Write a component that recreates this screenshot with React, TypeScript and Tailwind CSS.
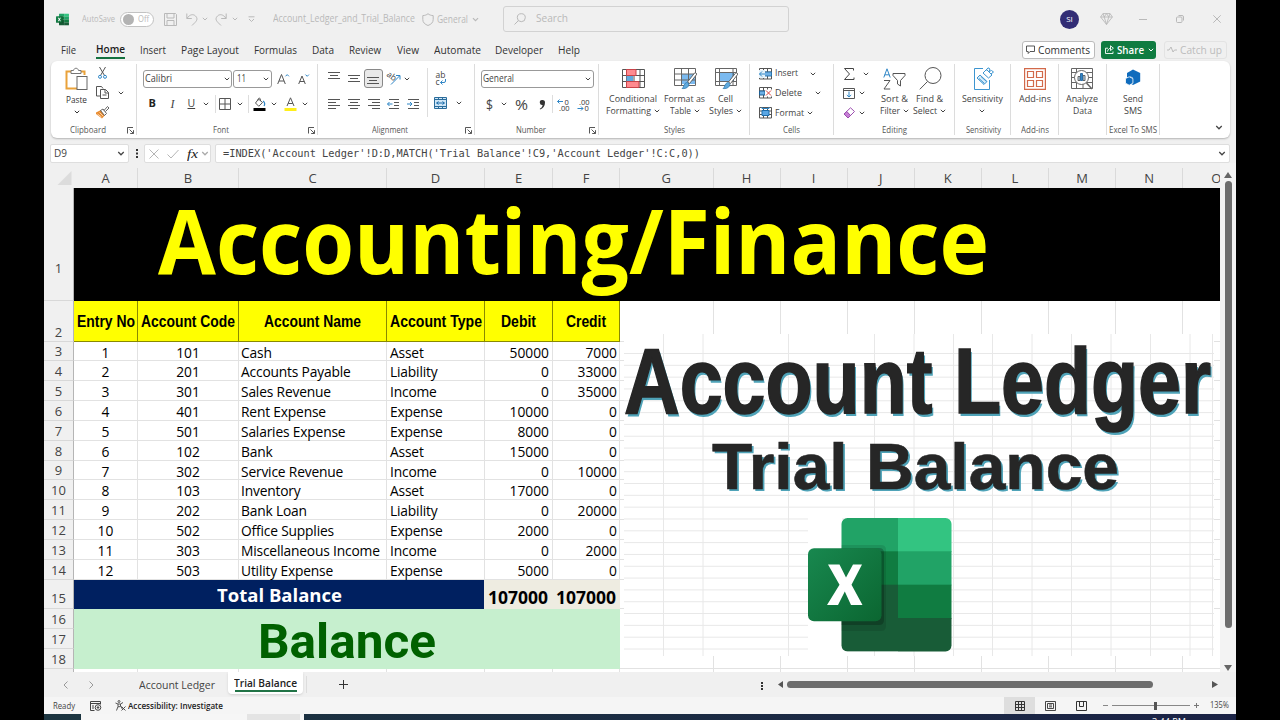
import { useLayoutEffect, useRef, type ReactNode } from "react";
import clsx from "clsx";

type FitProps = { className?: string; children: ReactNode };

// Stretches or squeezes one line of text to the width of its box
function Fit({ className, children }: FitProps) {
  const box = useRef<HTMLSpanElement>(null);
  const text = useRef<HTMLSpanElement>(null);

  useLayoutEffect(() => {
    if (!box.current || !text.current) return;
    text.current.style.transform = "none";
    const ratio = box.current.getBoundingClientRect().width / text.current.getBoundingClientRect().width;
    text.current.style.transform = `scaleX(${ratio})`;
  });

  return (
    <span ref={box} className={clsx("block shrink-0 whitespace-nowrap", className)}>
      <span ref={text} className="inline-block origin-left">{children}</span>
    </span>
  );
}

function Chevron({ className }: { className?: string }) {
  return (
    <svg viewBox="0 0 6 4" className={clsx("h-1 w-1.5 shrink-0", className)} fill="none" stroke="currentColor" strokeWidth="1">
      <path d="M.8.800 3 3 5.200.800" />
    </svg>
  );
}

function ExcelLogo({ className }: { className?: string }) {
  return (
    <svg viewBox="0 0 144 134" className={className}>
      <defs>
        <linearGradient id="plate" x1="0" y1="0" x2="1" y2="1">
          <stop offset="0" stopColor="#18884f" />
          <stop offset="1" stopColor="#0b6631" />
        </linearGradient>
        <clipPath id="sheet"><rect x="33.5" y="0" width="110" height="133.5" rx="6" /></clipPath>
      </defs>
      <g clipPath="url(#sheet)">
        <rect x="33" width="57" height="34" fill="#21a366" />
        <rect x="90" width="54" height="34" fill="#33c481" />
        <rect x="33" y="33.3" width="57" height="34" fill="#107c41" />
        <rect x="90" y="33.3" width="54" height="34" fill="#21a366" />
        <rect x="33" y="66.7" width="57" height="67" fill="#185c37" />
        <rect x="90" y="66.7" width="54" height="34" fill="#107c41" />
        <rect x="90" y="100" width="54" height="34" fill="#185c37" />
        <path d="M33 27h40q5 0 5 5v76q0 5-5 5H33z" fill="#000" opacity=".1" />
        <path d="M33 30h38q5 0 5 5v67q0 5-5 5H33z" fill="#000" opacity=".22" />
      </g>
      <rect y="30.3" width="73.5" height="73" rx="6" fill="url(#plate)" />
      <path d="M20 46.500H31.500L38 59.500 45 46.500H54L43.500 66.700 54.500 87H43L36.800 73.500 30 87H19L31.500 66.700z" fill="#fff" />
    </svg>
  );
}

const faded = "text-[#b9b9b9]";

function TitleBar() {
  return (
    <div className={clsx("flex h-[38px] items-center pl-3", faded)}>
      <ExcelLogo className="h-[13px] w-[13px]" />
      <Fit className="ml-[13px] w-[33px] text-[9px]">AutoSave</Fit>
      <div className="ml-[5px] flex h-[15px] w-[34px] items-center rounded-full border border-[#c2c2c2] bg-white pl-[2px]">
        <div className="h-[11px] w-[11px] rounded-full bg-[#b3b3b3]" />
        <Fit className="ml-1 w-[11px] text-[9px]">Off</Fit>
      </div>
      <svg viewBox="0 0 13 13" className="ml-[10px] h-[13px] w-[13px]" fill="none" stroke="currentColor">
        <path d="M.5.500h11l1 1v11H.5zM3 .5v4.500h7V.5M3 12.500v-5h7v5" />
      </svg>
      <svg viewBox="0 0 12 13" className="ml-[9px] h-[13px] w-[12px]" fill="none" stroke="currentColor">
        <path d="M.8.500v5h5M1 5.300C4 1 7.500 1 9.500 3s2 4-.5 6.500L6 12.500" />
      </svg>
      <Chevron className="ml-1" />
      <svg viewBox="0 0 12 13" className="ml-[7px] h-[13px] w-[12px]" fill="none" stroke="currentColor">
        <path d="M11.200.500v5h-5M11 5.300C8 1 4.500 1 2.500 3s-2 4 .5 6.500l3 3" />
      </svg>
      <Chevron className="ml-[5px]" />
      <svg viewBox="0 0 7 7" className="ml-[10px] h-[7px] w-[7px]" fill="none" stroke="currentColor">
        <path d="M.5.800h6M1 3l2.500 2.500L6 3" />
      </svg>
      <Fit className="ml-[18px] w-[142px] text-[10.5px]">Account_Ledger_and_Trial_Balance</Fit>
      <svg viewBox="0 0 12 13" className="ml-[7px] h-[13px] w-[12px]" fill="none" stroke="currentColor">
        <path d="M6 .7C4.500 2 2.800 2.500.8 2.600V6.500c0 3 2 4.800 5.200 6 3.200-1.200 5.200-3 5.200-6V2.600C9.200 2.500 7.500 2 6 .7z" />
      </svg>
      <Fit className="ml-[3px] w-[31px] text-[10px]">General</Fit>
      <Chevron className="ml-1 h-[5px] w-[7px]" />
      <div className="ml-[24px] flex h-[26px] w-[286px] items-center rounded-[3px] border border-[#d2d2d2] pl-[10px]">
        <svg viewBox="0 0 12 12" className="h-[12px] w-[12px]" fill="none" stroke="currentColor">
          <circle cx="7.300" cy="4.700" r="4" /><path d="M4.300 7.700.5 11.500" />
        </svg>
        <Fit className="ml-[10px] w-[32px] text-[10.5px]">Search</Fit>
      </div>
      <div className="ml-[271px] flex h-[19px] w-[19px] items-center justify-center rounded-full bg-[#322d75] text-[8px] text-white">SI</div>
      <svg viewBox="0 0 13 12" className="ml-[21px] h-[12px] w-[13px]" fill="none" stroke="currentColor" strokeWidth=".9">
        <path d="M3 .6h7l2.400 3.400L6.500 11.400.6 4zM.6 4h11.800M4.200 4l2.300 7.400L8.800 4 6.500.6zM3 .6 4.200 4M10 .6 8.800 4" />
      </svg>
      <svg viewBox="0 0 8 8" className="ml-[26px] h-2 w-2" stroke="currentColor"><path d="M0 4.500h8" /></svg>
      <svg viewBox="0 0 8 8" className="ml-[29px] h-2 w-2" fill="none" stroke="currentColor">
        <rect x=".5" y="2" width="5.500" height="5.500" rx="1" /><path d="M2.500.5h3.500q1.500 0 1.500 1.500v3.500" />
      </svg>
      <svg viewBox="0 0 8 8" className="ml-[29px] h-2 w-2" stroke="currentColor"><path d="m.3.3 7.400 7.400M7.700.3.3 7.700" /></svg>
    </div>
  );
}

function MenuBar() {
  return (
    <div className="flex h-[23px] items-center pl-[17px] text-[11.5px] text-[#333]">
      <Fit className="w-[15px]">File</Fit>
      <div className="ml-5 w-[29px] shrink-0">
        <Fit className="h-[17px] w-[29px] font-semibold leading-[18px] text-[#1c1c1c]">Home</Fit>
        <div className="h-[2px] bg-[#14713f]" />
      </div>
      <Fit className="ml-[15px] w-[26px]">Insert</Fit>
      <Fit className="ml-[15px] w-[58px]">Page Layout</Fit>
      <Fit className="ml-[15px] w-[43px]">Formulas</Fit>
      <Fit className="ml-[15px] w-[22px]">Data</Fit>
      <Fit className="ml-[15px] w-[32px]">Review</Fit>
      <Fit className="ml-[16px] w-[22px]">View</Fit>
      <Fit className="ml-[15px] w-[47px]">Automate</Fit>
      <Fit className="ml-[14px] w-[48px]">Developer</Fit>
      <Fit className="ml-[15px] w-[22px]">Help</Fit>
      <div className="ml-[442px] flex h-[18px] w-[73px] shrink-0 items-center rounded-[3px] border border-[#bbb] bg-white pl-[3px]">
        <svg viewBox="0 0 9 9" className="h-[9px] w-[9px]" fill="none" stroke="#444" strokeWidth=".9">
          <path d="M.5 1h8v5.500H4L2.200 8.500v-2H.5z" />
        </svg>
        <Fit className="ml-[3px] w-[52px]">Comments</Fit>
      </div>
      <div className="ml-[6px] flex h-[18px] w-[55px] shrink-0 items-center rounded-[3px] bg-[#107c41] pl-[4px] text-white">
        <svg viewBox="0 0 9 9" className="h-[9px] w-[9px]" fill="none" stroke="currentColor" strokeWidth=".9">
          <path d="M3 3.200H.5v5.300h7.500V6.500M2.500 6.500C3 4 4.500 3.200 6 3.200M5.500.8 8.400 3.200 5.500 5.600z" />
        </svg>
        <Fit className="ml-[3px] w-[27px] font-semibold">Share</Fit>
        <Chevron className="ml-[4px]" />
      </div>
      <div className="ml-[8px] flex h-[18px] w-[63px] shrink-0 items-center rounded-[3px] border border-[#e3e3e3] pl-[2px] text-[#bcbcbc]">
        <svg viewBox="0 0 10 8" className="h-2 w-[10px]" fill="none" stroke="currentColor"><path d="M0 4h2l2-3 2 5 1.500-2H10" /></svg>
        <Fit className="ml-[3px] w-[42px]">Catch up</Fit>
      </div>
    </div>
  );
}

type GroupProps = { label?: string; labelClass?: string; className?: string; launcher?: boolean; children: ReactNode };

function Group({ label, labelClass, className, launcher, children }: GroupProps) {
  return (
    <div className={clsx("mt-[3px] flex h-[71px] shrink-0 flex-col border-r border-[#dcdcdc]", className)}>
      <div className="h-[59px] shrink-0">{children}</div>
      <div className="flex h-[14px] shrink-0 items-center text-[9px] text-[#555]">
        {label && <Fit className={labelClass}>{label}</Fit>}
        {launcher && (
          <svg viewBox="0 0 7 7" className="ml-auto mr-[2px] h-[7px] w-[7px]" fill="none" stroke="#444" strokeWidth=".9">
            <path d="M.5 6.500V.5H6M2.500 2.500l3.800 3.800M6.500 3.200v3.300H3.200" />
          </svg>
        )}
      </div>
    </div>
  );
}

function Lines({ rows, className }: { rows: number[][]; className?: string }) {
  return (
    <svg viewBox="0 0 12 12" className={clsx("h-3 w-3 shrink-0", className)} stroke="#555">
      {rows.map(([x1, x2, y]) => <path key={y} d={`M${x1} ${y}H${x2}`} />)}
    </svg>
  );
}

function Clipboard() {
  return (
    <Group label="Clipboard" labelClass="ml-[19px] w-[36px]" launcher className="w-[85.500px]">
      <div className="flex">
        <div className="ml-[14px] flex w-[23px] flex-col items-center text-[9.5px] text-[#333]">
          <svg viewBox="0 0 23 24" className="mt-[3px] h-6 w-[23px]" fill="none">
            <path d="M12 21.500H1.500v-17H7M15 4.500h4.500V8" stroke="#e9a23a" strokeWidth="2" />
            <path d="M6 6.500v-3h2.500C9 .5 13 .5 13.500 3.500H16v3z" fill="#fff" stroke="#777" />
            <rect x="12" y="9.500" width="10" height="13" fill="#fff" stroke="#666" />
          </svg>
          <Fit className="mt-[2px] h-[13px] w-[21px] leading-[13px]">Paste</Fit>
          <Chevron className="mt-[4px]" />
        </div>
        <div className="ml-[6px] flex w-4 flex-col items-center">
          <svg viewBox="0 0 9 12" className="mt-[3px] h-3 w-[9px]" fill="none">
            <path d="M1.500 0 6.500 8.500M7.500 0l-5 8.500" stroke="#555" />
            <circle cx="2" cy="9.800" r="1.500" stroke="#2f86c6" /><circle cx="7" cy="9.800" r="1.500" stroke="#2f86c6" />
          </svg>
          <svg viewBox="0 0 13 13" className="mt-[7px] h-[13px] w-[13px]" fill="#fff" stroke="#555">
            <path d="M4.500 10H.5V.5h5l1.500 2" /><path d="M4.500 3.500h5l3 3v6h-8zM9 3.500v3.500h3.500M6.500 9h4" />
          </svg>
          <svg viewBox="0 0 13 13" className="mt-[7px] h-[13px] w-[13px]">
            <path d="M0 6.500 5 4l4 5-3 3.500L0 8z" fill="#e98b2e" />
            <path d="M4.500 4.500 7 3l3.500 4.500-2 2zM8 4.500l3.500-4L13 2 9.500 5.500" fill="#fff" stroke="#555" strokeWidth=".9" />
            <path d="m1.500 8 4 3M3.500 6.500 7 10" stroke="#fff" strokeWidth=".6" />
          </svg>
        </div>
        <Chevron className="ml-[8px] mt-[27px]" />
      </div>
    </Group>
  );
}

function FontGroup() {
  return (
    <Group label="Font" labelClass="ml-[76px] w-[16px]" launcher className="w-[181px]">
      <div className="flex h-[29px] items-center pl-[6px] text-[10px] text-[#444]">
        <div className="flex h-[18px] w-[89px] items-center rounded-[3px] border border-[#999] pl-[1px] pr-[1px]">
          <Fit className="w-[27px]">Calibri</Fit><Chevron className="ml-auto" />
        </div>
        <div className="ml-px flex h-[18px] w-[39px] items-center rounded-[3px] border border-[#999] pl-[3px] pr-[2px]">
          <Fit className="w-[9px]">11</Fit><Chevron className="ml-auto" />
        </div>
        <svg viewBox="0 0 13 12" className="ml-[5px] h-3 w-[13px]" fill="none" stroke="#555"><path d="M.7 11 4.500 1.500 8.300 11M2 8h5" /><path d="M8.500 3.300l1.700-1.700 1.700 1.700" stroke="#2f86c6" /></svg>
        <svg viewBox="0 0 13 12" className="ml-[8px] h-3 w-[13px]" fill="none" stroke="#555"><path d="M.7 11 4 3l3.300 8M1.800 8.500h4.500" /><path d="M7.500 1.600l1.700 1.700 1.700-1.700" stroke="#2f86c6" /></svg>
      </div>
      <div className="flex h-[21px] items-center pl-[12px] text-[11px] text-[#444]">
        <span className="w-[8px] font-bold text-[#222]">B</span>
        <span className="ml-[14px] w-[6px] font-['Liberation_Serif'] text-[12px] italic">I</span>
        <span className="ml-[11px] w-[8px] text-[10.500px] underline">U</span>
        <Chevron className="ml-[7px]" />
        <div className="ml-[6px] h-[18px] w-px bg-[#ddd]" />
        <svg viewBox="0 0 12 12" className="ml-[3px] h-3 w-3" fill="none" stroke="#555"><path d="M.5.500h11v11H.5zM6 .5v11M.5 6h11" /></svg>
        <Chevron className="ml-[6px]" />
        <div className="ml-[5px] h-[18px] w-px bg-[#ddd]" />
        <svg viewBox="0 0 13 14" className="ml-[4px] h-[14px] w-[13px]" fill="none">
          <path d="m5.500 2 4 3.500-3.700 3.800L2.500 6z" stroke="#555" /><path d="M5 3.500C5 0 8 .5 7.500 4" stroke="#555" /><path d="M10 4c2 1 2 3.500 1 5" stroke="#2f86c6" strokeWidth="1.300" />
          <path d="M.5 11h12v3H.5z" fill="#000" />
        </svg>
        <Chevron className="ml-[5px]" />
        <svg viewBox="0 0 13 14" className="ml-[7px] h-[14px] w-[13px]" fill="none"><path d="M3 9 6.500.8 10 9M4.200 6.500h4.600" stroke="#555" /><path d="M.5 11h12v3H.5z" fill="#ffef1a" /></svg>
        <Chevron className="ml-[5px]" />
      </div>
    </Group>
  );
}

function Alignment() {
  return (
    <Group label="Alignment" labelClass="ml-[54px] w-[36px]" launcher className="w-[157px]">
      <div className="flex">
        <div className="w-[109px]">
          <div className="flex h-[29px] items-center pl-[10px]">
            <Lines rows={[[0, 12, 2.5], [2, 10, 5.5], [0, 12, 8.5]]} className="-mt-[5px]" />
            <Lines rows={[[0, 12, 2.5], [2, 10, 5.5], [0, 12, 8.5]]} className="ml-[8px]" />
            <div className="ml-[4px] flex h-[19px] w-[19px] items-end justify-center rounded-[3px] border border-[#888] bg-[#e9e9e9]">
              <Lines rows={[[0, 12, 2.5], [2, 10, 5.5], [0, 12, 8.5]]} />
            </div>
            <svg viewBox="0 0 13 13" className="ml-[4px] h-[13px] w-[13px] overflow-visible" fill="none">
              <text x="-.5" y="6" className="text-[8.500px]" fill="#444" transform="rotate(38 3 4)">ab</text>
              <path d="m4 12.500 8.500-8.500M9 3.500h4V7.500" stroke="#2f86c6" />
            </svg>
            <Chevron className="ml-[4px]" />
          </div>
          <div className="flex h-[21px] items-center pl-[10px]">
            <Lines rows={[[0, 12, 1.5], [0, 8, 4.5], [0, 12, 7.5], [0, 8, 10.5]]} />
            <Lines rows={[[0, 12, 1.5], [2, 10, 4.5], [0, 12, 7.5], [2, 10, 10.5]]} className="ml-[8px]" />
            <Lines rows={[[0, 12, 1.5], [4, 12, 4.5], [0, 12, 7.5], [4, 12, 10.5]]} className="ml-[8px]" />
            <svg viewBox="0 0 12 12" className="ml-[7px] h-3 w-3" fill="none" stroke="#555"><path d="M2 1.500h10M7 4.500h5M7 7.500h5M2 10.500h10" /><path d="M.5 6h5M2.500 4l-2 2 2 2" stroke="#2f86c6" /></svg>
            <svg viewBox="0 0 12 12" className="ml-[8px] h-3 w-3" fill="none" stroke="#555"><path d="M1 1.500h11M7 4.500h5M7 7.500h5M1 10.500h11" /><path d="M0 6h5M3 4l2 2-2 2" stroke="#2f86c6" /></svg>
          </div>
        </div>
        <div className="mt-[4px] h-[49px] w-px bg-[#ddd]" />
        <div className="pl-[6px]">
          <svg viewBox="0 0 13 14" className="mt-[7px] h-[14px] w-[13px] overflow-visible" fill="none">
            <text x="1.500" y="7" fill="#444" className="text-[8.500px]">ab</text><text x="1.500" y="13.500" fill="#444" className="text-[8.500px]">c</text>
            <path d="M11.500 8v2q0 1.500-1.500 1.500H6.500M8.500 9.500l-2 2 2 2" stroke="#2f86c6" />
          </svg>
          <div className="mt-[12px] flex items-center">
            <svg viewBox="0 0 13 12" className="h-3 w-[13px]" fill="none"><path d="M.5.500h12v11H.5z" fill="#cfe6f7" stroke="#2b6d9c" /><path d="M.5 2.500h12M.5 9.500h12M4.500.5v2M8.500.5v2M4.500 9.500v2M8.500 9.500v2" stroke="#2b6d9c" /><path d="M2.500 6h8M4.500 4.500 2.700 6l1.800 1.500M8.500 4.500 10.300 6 8.500 7.500" stroke="#1569a8" /></svg>
            <Chevron className="ml-[9px]" />
          </div>
        </div>
      </div>
    </Group>
  );
}

function NumberGroup() {
  return (
    <Group label="Number" labelClass="ml-[41px] w-[30px]" launcher className="w-[124px]">
      <div className="flex h-[29px] items-center pl-[6px] text-[10px] text-[#444]">
        <div className="flex h-[18px] w-[113px] items-center rounded-[3px] border border-[#999] pl-[1px] pr-[2px]">
          <Fit className="w-[31px]">General</Fit><Chevron className="ml-auto" />
        </div>
      </div>
      <div className="flex h-[22px] items-center pl-[11px] text-[14px] text-[#444]">
        <Fit className="w-[7px]">$</Fit>
        <Chevron className="ml-[8px]" />
        <Fit className="ml-[8px] w-[13px]">%</Fit>
        <svg viewBox="0 0 7 11" className="ml-[11px] h-[11px] w-[7px]"><path d="M3 1a2.500 2.500 0 0 1 3 2.800C6 7 4 9.500 1 10.500L.8 9.800C2.500 9 3.500 7.500 3.600 6A2.500 2.500 0 1 1 3 1z" fill="#333" /></svg>
        <div className="ml-[6px] h-[18px] w-px bg-[#ddd]" />
        <svg viewBox="0 0 13 13" className="ml-[4px] h-[13px] w-[13px] overflow-visible" fill="none">
          <text x="7.500" y="6.500" fill="#333" className="text-[7.500px]">0</text><text x="2" y="13" fill="#333" className="text-[7.500px]">.00</text><path d="M.5 3.500h5.500M2.500 1.500l-2 2 2 2" stroke="#2f86c6" />
        </svg>
        <svg viewBox="0 0 13 13" className="ml-[7px] h-[13px] w-[13px] overflow-visible" fill="none">
          <text x="2" y="6.500" fill="#333" className="text-[7.500px]">.00</text><text x="7.500" y="13" fill="#333" className="text-[7.500px]">0</text><path d="M.5 10.500h5.500M4 8.500l2 2-2 2" stroke="#2f86c6" />
        </svg>
      </div>
    </Group>
  );
}

type BigProps = { icon: ReactNode; top: string; topClass: string; bottom?: string; bottomClass?: string; arrow?: boolean; className?: string };

function BigButton({ icon, top, topClass, bottom, bottomClass, arrow, className }: BigProps) {
  return (
    <div className={clsx("flex shrink-0 flex-col items-center text-[9.500px] text-[#444]", className)}>
      <div className="mt-[2px] flex h-[25px] items-center">{icon}</div>
      <Fit className={clsx("mt-[2px] h-[12px] leading-[12px]", topClass)}>{top}</Fit>
      <div className="flex h-[12px] items-center gap-[3px]">
        {bottom && <Fit className={clsx("leading-[12px]", bottomClass)}>{bottom}</Fit>}
        {arrow && <Chevron />}
      </div>
    </div>
  );
}

function TableIcon({ fill }: { fill: ReactNode }) {
  return (
    <svg viewBox="0 0 23 22" className="ml-px h-[22px] w-[23px]" fill="none">
      {fill}
    </svg>
  );
}

const brush = (
  <>
    <path d="M21 4.500 23 6l-7.500 9.500-2-1.500z" fill="#fff" stroke="#555" strokeWidth=".9" />
    <path d="M12.500 14.500c2 0 3 1.500 2 3.500-1 2-4 3-6.500 2.500 2-1 1.500-5 4.500-6z" fill="#5ea9dd" stroke="#2b75ad" strokeWidth=".7" />
  </>
);

function Styles() {
  return (
    <Group label="Styles" labelClass="ml-[65px] w-[21px]" className="w-[151px]">
      <div className="flex pl-[7px]">
        <BigButton className="w-[54px]" top="Conditional" topClass="w-[48px]" bottom="Formatting" bottomClass="w-[45px]" arrow icon={
          <svg viewBox="0 0 23 19" className="ml-px h-[19px] w-[23px]" fill="none">
            <path d="M.5.500h22v18H.5zM.5 6.500h22M.5 12.500h22M4.500.5v18M12 .5v18M18 .5v18" stroke="#555" />
            <path d="M4.500.500H14v6H4.500zM4.500 12.500H17v6H4.500z" fill="#ff8a8f" stroke="#c94349" /><path d="M4.500 7H11v5H4.500z" fill="#62a9dd" />
          </svg>
        } />
        <BigButton className="ml-[4px] w-[42px]" top="Format as" topClass="w-[41px]" bottom="Table" bottomClass="w-[21px]" arrow icon={
          <TableIcon fill={<><path d="M8 6h13v10H8z" fill="#7bbaf0" /><path d="M.5.500h21v17H.5zM.5 6h21M.5 12h21M7.500.5v17M14.500.5v17" stroke="#666" />{brush}</>} />
        } />
        <BigButton className="ml-[3px] w-[34px]" top="Cell" topClass="w-[15px]" bottom="Styles" bottomClass="w-[24px]" arrow icon={
          <TableIcon fill={<><path d="M4.500 4.500h14v9h-14z" fill="#7bbaf0" stroke="#2b75ad" /><path d="M.5.500h21v17H.5zM.5 4.500h21M.5 13.500h21M4.500.5v17M18 .5v17" stroke="#666" />{brush}</>} />
        } />
      </div>
    </Group>
  );
}

function CellIcon({ mark }: { mark: ReactNode }) {
  return (
    <svg viewBox="0 0 13 12" className="h-3 w-[13px]" fill="none">
      <path d="M.5.500h12v10.500H.5zM.5 4h12M.5 7.500h12M4.500.5v10.500M8.500.5v10.500" stroke="#555" />
      {mark}
    </svg>
  );
}

function Cells() {
  return (
    <Group label="Cells" labelClass="ml-[33px] w-[17px]" className="w-[84px]">
      <div className="pl-[9px] text-[9.500px] text-[#444]">
        <div className="flex h-[19px] items-center">
          <CellIcon mark={<><path d="M5 4h7.500v4H5z" fill="#6eb0e6" stroke="#2b75ad" /><path d="M0 2h6v8H0z" fill="#e5f2fb" /><path d="M.5 6H6M3 3.500.5 6 3 8.500" stroke="#2f86c6" /></>} />
          <Fit className="ml-[3px] w-[23px]">Insert</Fit><Chevron className="ml-[12px]" />
        </div>
        <div className="flex h-[20px] items-center">
          <CellIcon mark={<><path d="M.5 4H6v4H.5z" fill="#6eb0e6" stroke="#1c5f95" /><path d="M6 2.500h7v7H6z" fill="#fff" /><path d="m7 3.500 5 5M12 3.500l-5 5" stroke="#d8443f" /></>} />
          <Fit className="ml-[3px] w-[27px]">Delete</Fit><Chevron className="ml-[13px]" />
        </div>
        <div className="flex h-[20px] items-center">
          <CellIcon mark={<><path d="M3 3.500h7v5H3z" fill="#5aa6e4" stroke="#1c6cab" /><path d="M3 0v1.500h7V0" stroke="#2f86c6" /></>} />
          <Fit className="ml-[3px] w-[29px]">Format</Fit><Chevron className="ml-[3px]" />
        </div>
      </div>
    </Group>
  );
}

function Editing() {
  return (
    <Group label="Editing" labelClass="ml-[48px] w-[25px]" className="w-[121px]">
      <div className="flex text-[#444]">
        <div className="w-[43px] pl-[9px]">
          <div className="flex h-[19px] items-center">
            <svg viewBox="0 0 12 12" className="h-3 w-3" fill="none" stroke="#444"><path d="M10.500 2.500v-2h-9L6.500 6l-5 5.500h9.500v-2" /></svg>
            <Chevron className="ml-[8px]" />
          </div>
          <div className="flex h-[20px] items-center">
            <svg viewBox="0 0 12 11" className="h-[11px] w-3" fill="none" stroke="#555"><path d="M.5.500h11v10H.5zM.5 2.500h11" /><path d="M6 3.500v5.500M3.800 7 6 9l2.200-2" stroke="#2f86c6" /></svg>
            <Chevron className="ml-[4px]" />
          </div>
          <div className="flex h-[20px] items-center">
            <svg viewBox="0 0 12 12" className="h-3 w-3"><path d="M7.500.800 11.500 4.500 5 11 1 7z" fill="#fff" stroke="#9b4cae" /><path d="M3.800 4.500 7.500 8.500 5 11 1 7z" fill="#c77ed6" stroke="#9b4cae" /></svg>
            <Chevron className="ml-[4px]" />
          </div>
        </div>
        <BigButton className="ml-[3px] w-[30px]" top="Sort &" topClass="w-[27px]" bottom="Filter" bottomClass="w-[20px]" arrow icon={
          <svg viewBox="0 0 23 22" className="h-[22px] w-[23px]" fill="none">
            <path d="M.8 9.500 4 .8 7.200 9.500M1.800 6.800h4.400" stroke="#2f86c6" /><path d="M1 12.500h6l-6 8.500h6.200" stroke="#555" />
            <path d="M10 5.500h12v2l-4.500 5V18L14.500 16v-3.500L10 7.500z" stroke="#555" />
          </svg>
        } />
        <BigButton className="ml-[3px] w-[34px]" top="Find &" topClass="w-[27px]" bottom="Select" bottomClass="w-[24px]" arrow icon={
          <svg viewBox="0 0 23 23" className="ml-[1px] h-[23px] w-[23px]" fill="none" stroke="#555"><circle cx="14" cy="8.500" r="8" /><path d="M8.500 14.500.8 22.300" /></svg>
        } />
      </div>
    </Group>
  );
}

function Ribbon() {
  return (
    <div className="ml-[7px] flex h-[77px] w-[1179px] rounded-[6px] bg-white text-[#444] shadow-[0_1px_2px_rgba(0,0,0,0.25)]">
      <Clipboard />
      <FontGroup />
      <Alignment />
      <NumberGroup />
      <Styles />
      <Cells />
      <Editing />
      <Group label="Sensitivity" labelClass="ml-[11px] w-[35px]" className="w-[56px]">
        <BigButton top="Sensitivity" topClass="w-[41px]" arrow icon={
          <svg viewBox="0 0 22 23" className="ml-[3px] h-[23px] w-[22px]" fill="none" stroke="#3d95d0">
            <path d="M10 1.500H1.500v21h15V13" /><path d="m4 11 3-3 7 6.500-3 3zM6 11.500l5.500 5M8 9.500l5.500 5" fill="#d8ecf9" />
            <path d="m10 6 3.500-3.500L19 8l-3.500 3zM12.500 4 15 .8l2 1.200-1 2.500 2.500-1 2 1.500-2.500 2" fill="#fff" />
          </svg>
        } />
      </Group>
      <Group label="Add-ins" labelClass="ml-[10px] w-[28px]" className="w-[48px]">
        <BigButton className="ml-px" top="Add-ins" topClass="w-[32px]" icon={
          <svg viewBox="0 0 22 22" className="h-[22px] w-[22px]" fill="none" stroke="#d2694a" strokeWidth="1.200">
            <path d="M.6.600h20.800v20.800H.6zM3.500 3.500h6v6h-6zM12.500 3.500h6v6h-6zM3.500 12.500h6v6h-6zM12.500 12.500h6v6h-6z" />
          </svg>
        } />
      </Group>
      <Group className="w-[48px]">
        <BigButton top="Analyze" topClass="w-[32px]" bottom="Data" bottomClass="w-[19px]" icon={
          <svg viewBox="0 0 22 22" className="h-[22px] w-[22px]" fill="none" stroke="#666">
            <path d="M.5.500h21v20H.5zM.5 4.500h21M.5 9.500h21M.5 14.500h21M5.500 4.500v-4M5.500 14.500v6M12 14.500v6" />
            <circle cx="10.500" cy="9.500" r="7" fill="#fff" /><path d="M7 8.500h2v4H7zM12 7.500h2v5h-2z" fill="#bcdcf3" /><path d="M9.500 5.500h2v7h-2z" fill="#2f86c6" stroke="#2f6ea6" /><path d="m15.500 15 5.500 6" strokeWidth="1.500" />
          </svg>
        } />
      </Group>
      <Group label="Excel To SMS" labelClass="ml-[2px] w-[48px]" className="w-[53px]">
        <BigButton top="Send" topClass="w-[20px]" bottom="SMS" bottomClass="w-[18px]" icon={
          <svg viewBox="0 0 16 17" className="-mt-[2px] h-[17px] w-4">
            <path d="M8 .5 15.200 4v8.500L8 16 2 12V4z" fill="#0f6cbd" /><path d="M.5 9.500 4.200 7.800l3.700 1.700v4.700l-3.700 2-3.700-2z" fill="#0f6cbd" stroke="#fff" strokeWidth=".8" /><path d="m5 7.500 3 1.500" stroke="#fff" strokeWidth=".5" />
          </svg>
        } />
      </Group>
      <Chevron className="ml-[55px] mt-[64px] h-[5px] w-2" />
    </div>
  );
}

function FormulaBar() {
  return (
    <div className="mt-[6px] flex h-[19px] items-center pl-[6px] text-[10px] text-[#444]">
      <div className="flex h-[19px] w-[79px] items-center rounded-[2px] border border-[#dedede] bg-white pl-[3px] pr-[3px]">
        <Fit className="w-[13px]">D9</Fit>
        <Chevron className="ml-auto h-[5px] w-2" />
      </div>
      <svg viewBox="0 0 2 9" className="ml-[7px] h-[9px] w-[2px]" fill="#333"><path d="M0 0h2v2H0zM0 3.500h2v2H0zM0 7h2v2H0z" /></svg>
      <div className="ml-[6px] flex h-[19px] w-[67px] items-center rounded-[2px] border border-[#dedede] bg-white pl-[4px]">
        <svg viewBox="0 0 10 10" className="h-[10px] w-[10px]" stroke="#b5b5b5"><path d="m.5.5 9 9M9.500.5l-9 9" /></svg>
        <svg viewBox="0 0 12 10" className="ml-[8px] h-[10px] w-3" fill="none" stroke="#b5b5b5"><path d="m.5 5.500 3.500 3.500L11.500 1" /></svg>
        <Fit className="ml-[8px] w-[11px] font-['Liberation_Serif'] text-[13px] italic leading-[16px] text-[#222]">fx</Fit>
        <Chevron className="ml-[3px] h-[5px] w-2 text-[#aaa]" />
      </div>
      <div className="ml-[4px] flex h-[19px] w-[1015px] items-center rounded-[2px] border border-[#dedede] bg-white pl-[7px] pr-[3px]">
        <Fit className="w-[477px] font-['DejaVu_Sans_Mono'] text-[10px]">
          =INDEX('Account Ledger'!D:D,MATCH('Trial Balance'!C9,'Account Ledger'!C:C,0))
        </Fit>
        <Chevron className="ml-auto h-[5px] w-2" />
      </div>
    </div>
  );
}

const colHead = "shrink-0 border-r border-[#dadada] text-center";

function ColumnHeads() {
  return (
    <div className="mt-[5px] flex h-[20px] w-[1176px] overflow-hidden text-[13px] leading-[20px] text-[#444]">
      <div className="flex w-[30px] shrink-0 items-end justify-end pb-[3px] pr-[2px]">
        <svg viewBox="0 0 14 14" className="h-[14px] w-[15px]"><path d="M14 0v14H0z" fill="#dcdcdc" /></svg>
      </div>
      <div className={clsx(colHead, "w-[64px]")}>A</div>
      <div className={clsx(colHead, "w-[101px]")}>B</div>
      <div className={clsx(colHead, "w-[148px]")}>C</div>
      <div className={clsx(colHead, "w-[98px]")}>D</div>
      <div className={clsx(colHead, "w-[68px]")}>E</div>
      <div className={clsx(colHead, "w-[67px]")}>F</div>
      <div className={clsx(colHead, "w-[93.500px]")}>G</div>
      {["H", "I", "J", "K", "L", "M", "N", "O"].map((c) => (
        <div key={c} className={clsx(colHead, "w-[67.100px]")}>{c}</div>
      ))}
    </div>
  );
}

const entries = [
  ["1", "101", "Cash", "Asset", "50000", "7000"],
  ["2", "201", "Accounts Payable", "Liability", "0", "33000"],
  ["3", "301", "Sales Revenue", "Income", "0", "35000"],
  ["4", "401", "Rent Expense", "Expense", "10000", "0"],
  ["5", "501", "Salaries Expense", "Expense", "8000", "0"],
  ["6", "102", "Bank", "Asset", "15000", "0"],
  ["7", "302", "Service Revenue", "Income", "0", "10000"],
  ["8", "103", "Inventory", "Asset", "17000", "0"],
  ["9", "202", "Bank Loan", "Liability", "0", "20000"],
  ["10", "502", "Office Supplies", "Expense", "2000", "0"],
  ["11", "303", "Miscellaneous Income", "Income", "0", "2000"],
  ["12", "503", "Utility Expense", "Expense", "5000", "0"],
];

function RowHead({ n, className }: { n: number; className?: string }) {
  return (
    <div className={clsx("flex w-[30px] shrink-0 items-end justify-center border-b border-r border-[#d8d8d8] border-r-[#b5b5b5] bg-[#f0f0f0] text-[13px] font-normal leading-[18px] text-[#444]", className)}>{n}</div>
  );
}

const headCell = "flex shrink-0 items-center justify-center border-b border-r border-[#8a8a00] bg-[#ff0] pt-[2px] font-['Liberation_Sans'] text-[16px] font-bold";
const cell = "shrink-0 border-b border-r border-[#e2e2e2]";
const nameCell = "whitespace-nowrap tracking-[-0.18px]";

function EmptyCells() {
  return (
    <>
      <div className={clsx(cell, "w-[93.500px]")} />
      {Array.from({ length: 8 }, (_, i) => <div key={i} className={clsx(cell, "w-[67.100px]")} />)}
    </>
  );
}

// Picture placed over the empty columns, with its own lighter gridlines
function TitlePicture() {
  const xs = [663.5, 703, 788.5, 874.5, 914, 953.5, 992.5, 1032, 1071.5, 1111, 1150.5, 1190, 1212.5];
  const ys = Array.from({ length: 26 }, (_, i) => 353.5 + i * 11.82);
  return (
    <div className="absolute left-[580px] top-[146px] h-[322px] w-[590px] overflow-hidden bg-white font-['Liberation_Sans'] font-bold text-[#262626]">
      <svg viewBox="624 334 590 322" className="absolute inset-0 h-full w-full" stroke="#e8e8e8">
        {xs.map((x) => <path key={x} d={`M${x} 334V656`} />)}
        {ys.map((y) => <path key={y} d={`M624 ${y}H1214`} />)}
      </svg>
      <div className="relative flex flex-col">
        <Fit className="mt-[-7px] h-[109px] w-[587px] text-[93px] leading-[109px] [-webkit-text-stroke:1.6px_#262626] [text-shadow:2px_3px_0_#4fa3b8]">Account Ledger</Fit>
        <Fit className="-mt-[8px] ml-[88px] h-[78px] w-[407px] text-[65px] leading-[78px] [-webkit-text-stroke:0.6px_#262626] [text-shadow:2px_2px_0_#4fa3b8]">Trial Balance</Fit>
        <div className="ml-[184px] mt-[12px] h-[139px] w-[145px] bg-[linear-gradient(to_right,#fff_34px,transparent_34px)]">
          <ExcelLogo className="h-[134px] w-[144px]" />
        </div>
      </div>
    </div>
  );
}

function Sheet() {
  return (
    <div className="relative h-[484px] w-[1176px] overflow-hidden bg-white text-black">
      <div className="flex h-[113px]">
        <RowHead n={1} className="pb-[23px]" />
        <div className="w-[1146px] bg-black pl-[84px] font-bold text-[#ff0]">
          <Fit className="h-[113px] w-[831px] text-[89px] leading-[103px]">Accounting/Finance</Fit>
        </div>
      </div>
      <div className="flex h-[40.500px]">
        <RowHead n={2} />
        <div className={clsx(headCell, "w-[64px]")}><Fit className="w-[58px]">Entry No</Fit></div>
        <div className={clsx(headCell, "w-[101px]")}><Fit className="w-[94px]">Account Code</Fit></div>
        <div className={clsx(headCell, "w-[148px]")}><Fit className="w-[97px]">Account Name</Fit></div>
        <div className={clsx(headCell, "w-[98px]")}><Fit className="w-[92px]">Account Type</Fit></div>
        <div className={clsx(headCell, "w-[68px]")}><Fit className="w-[35px]">Debit</Fit></div>
        <div className={clsx(headCell, "w-[67px]")}><Fit className="w-[40px]">Credit</Fit></div>
        <EmptyCells />
      </div>
      {entries.map(([no, code, name, type, debit, credit], i) => (
        <div key={no} className="flex h-[19.850px] text-[13.800px] leading-[21px]">
          <RowHead n={i + 3} />
          <div className={clsx(cell, "w-[64px] text-center")}>{no}</div>
          <div className={clsx(cell, "w-[101px] text-center")}>{code}</div>
          <div className={clsx(cell, nameCell, "w-[148px] pl-[2px]")}>{name}</div>
          <div className={clsx(cell, nameCell, "w-[98px] pl-[3px]")}>{type}</div>
          <div className={clsx(cell, "w-[68px] pr-[3px] text-right")}>{debit}</div>
          <div className={clsx(cell, "w-[67px] pr-[2px] text-right")}>{credit}</div>
          <EmptyCells />
        </div>
      ))}
      <div className="flex h-[29.300px]">
        <RowHead n={15} className="pb-px" />
        <div className="flex w-[410px] shrink-0 justify-center bg-[#002060] font-bold text-white">
          <Fit className="w-[125px] text-[18.500px] leading-[29px]">Total Balance</Fit>
        </div>
        <div className="flex w-[136px] shrink-0 items-end justify-around bg-[#eeece1] text-[17.300px] font-bold leading-[22px]">
          <Fit className="w-[60px]">107000</Fit>
          <Fit className="w-[60px]">107000</Fit>
        </div>
        <EmptyCells />
      </div>
      <div className="flex h-[60px]">
        <div>
          {[16, 17, 18].map((n) => <RowHead key={n} n={n} className="h-[20px]" />)}
        </div>
        <div className="flex w-[546px] shrink-0 justify-center bg-[#c6efce] font-['Roboto'] font-bold text-[#006100]">
          <Fit className="w-[178px] text-[49px] leading-[65px]">Balance</Fit>
        </div>
        <EmptyCells />
      </div>
      <div className="flex h-[20px]">
        <div className="w-[30px] shrink-0 border-r border-[#b5b5b5] bg-[#f0f0f0]" />
        <div className={clsx(cell, "w-[64px]")} />
        <div className={clsx(cell, "w-[101px]")} />
        <div className={clsx(cell, "w-[148px]")} />
        <div className={clsx(cell, "w-[98px]")} />
        <div className={clsx(cell, "w-[68px]")} />
        <div className={clsx(cell, "w-[67px]")} />
        <EmptyCells />
      </div>
      <TitlePicture />
    </div>
  );
}

function VerticalScroll() {
  return (
    <div className="flex h-[509px] w-4 flex-col items-center bg-[#f3f3f3] pt-[9px]">
      <svg viewBox="0 0 8 6" className="h-[6px] w-2" fill="#666"><path d="M4 0 8 6H0z" /></svg>
      <div className="mt-[3px] h-[447px] w-[7px] rounded-full bg-[#6d6d6d]" />
      <svg viewBox="0 0 8 6" className="mt-[37px] h-[6px] w-2" fill="#666"><path d="M4 6 0 0h8z" /></svg>
    </div>
  );
}

function SheetTabs() {
  return (
    <div className="flex h-[25px] items-center text-[11px] text-[#444]">
      <svg viewBox="0 0 5 8" className="ml-[19px] h-2 w-[5px]" fill="none" stroke="#999"><path d="M4.500.5 1 4l3.500 3.500" /></svg>
      <svg viewBox="0 0 5 8" className="ml-[21px] h-2 w-[5px]" fill="none" stroke="#999"><path d="M.5.5 4 4 .5 7.500" /></svg>
      <Fit className="ml-[45px] mt-[2px] w-[76px]">Account Ledger</Fit>
      <div className="ml-[13px] flex h-[22px] w-[75px] flex-col items-center self-start rounded-b-[4px] bg-white pt-[2px] shadow-sm">
        <Fit className="h-[16px] w-[63px] font-semibold leading-[18px] text-[#222]">Trial Balance</Fit>
        <div className="h-[1.500px] w-[62px] bg-[#217346]" />
      </div>
      <div className="ml-[3px] h-[17px] w-px bg-[#ddd]" />
      <svg viewBox="0 0 9 9" className="ml-[32px] h-[9px] w-[9px]" stroke="#333"><path d="M4.500 0v9M0 4.500h9" /></svg>
      <svg viewBox="0 0 2 8" className="ml-[413px] mt-[2px] h-2 w-[2px]" fill="#333"><path d="M0 0h2v2H0zM0 3h2v2H0zM0 6h2v2H0z" /></svg>
      <svg viewBox="0 0 5 7" className="ml-[15px] h-[7px] w-[5px]" fill="#555"><path d="M5 0v7L0 3.500z" /></svg>
      <div className="ml-[4px] h-[7px] w-[366px] rounded-full bg-[#6d6d6d]" />
      <svg viewBox="0 0 6 7" className="ml-[59px] h-[7px] w-[6px]" fill="#555"><path d="M0 0v7l6-3.500z" /></svg>
    </div>
  );
}

function StatusBar() {
  return (
    <div className="flex h-[17px] items-center bg-[#f5f5f5] pl-[9px] text-[9px] text-[#444]">
      <Fit className="w-[22px]">Ready</Fit>
      <svg viewBox="0 0 12 10" className="ml-[15px] h-[10px] w-3" fill="none" stroke="#444"><path d="M4.500 9.500H.5v-9h10v3M.5 2.500h10M2 5h2M2 7h2" /><circle cx="8" cy="6.500" r="2.800" /><circle cx="8" cy="6.500" r=".8" fill="#444" /></svg>
      <svg viewBox="0 0 11 11" className="ml-[13px] h-[11px] w-[11px]" fill="none" stroke="#444" strokeWidth=".9"><circle cx="4" cy="1.500" r="1" /><path d="M.5 3 3 4v2.500L1.500 10.500M8 2.500 5.500 4v2L8 10M3 4h2.500M3 6.500l1 .5 1.500-1M6.500 6.500l4 4M10.500 6.500l-4 4" /></svg>
      <Fit className="ml-[2px] w-[95px] font-semibold text-[#222]">Accessibility: Investigate</Fit>
      <div className="ml-[781px] flex h-[17px] w-[31px] items-center justify-center bg-[#dedede]">
        <svg viewBox="0 0 10 10" className="h-[10px] w-[10px]" fill="none" stroke="#333"><path d="M.5.500h9v9h-9zM.5 3.500h9M.5 6.500h9M3.500.5v9M6.500.5v9" /></svg>
      </div>
      <svg viewBox="0 0 11 10" className="ml-[10px] h-[10px] w-[11px]" fill="none" stroke="#333"><path d="M.5.500h10v9H.5zM2.500 2.500h6v5h-6zM4 4h3M4 5.800h3" strokeWidth=".9" /></svg>
      <svg viewBox="0 0 11 10" className="ml-[20px] h-[10px] w-[11px]" fill="none" stroke="#333"><path d="M.5.500h10v9H.5zM3.500.5v5h4v-5" /></svg>
      <div className="ml-[16px] h-px w-[5px] bg-[#888]" />
      <div className="ml-[4px] flex w-[78px] items-center">
        <div className="h-px w-[42px] bg-[#888]" />
        <div className="h-[8px] w-[3px] bg-[#555]" />
        <div className="h-px flex-1 bg-[#888]" />
      </div>
      <svg viewBox="0 0 5 5" className="ml-[4px] h-[5px] w-[5px]" stroke="#777"><path d="M2.500 0v5M0 2.500h5" /></svg>
      <Fit className="ml-[11px] w-[19px] text-[8.500px]">135%</Fit>
    </div>
  );
}

export default function App() {
  return (
    <div className="h-[720px] w-[1280px] overflow-hidden bg-black px-[44px] font-['Open_Sans','Noto_Sans',sans-serif]">
      <div className="flex h-[720px] w-[1192px] flex-col bg-[#f0f0f0]">
        <TitleBar />
        <MenuBar />
        <Ribbon />
        <FormulaBar />
        <div className="flex h-[509px]">
          <div className="w-[1176px] shrink-0">
            <ColumnHeads />
            <Sheet />
          </div>
          <VerticalScroll />
        </div>
        <SheetTabs />
        <StatusBar />
        <div className="flex h-[6px] overflow-hidden bg-[linear-gradient(to_right,#1c3540,#1b2346)] text-[9px] leading-[15px] text-white">
          <div className="ml-[37px] h-[6px] w-[166px] bg-[#f6f6f6]" />
          <div className="h-[6px] w-[53px] bg-[#e4e4e4]" />
          <div className="h-[6px] w-[4px] bg-[#f6f6f6]" />
          <Fit className="ml-[848px] w-[34px]">3:44 PM</Fit>
        </div>
      </div>
    </div>
  );
}
